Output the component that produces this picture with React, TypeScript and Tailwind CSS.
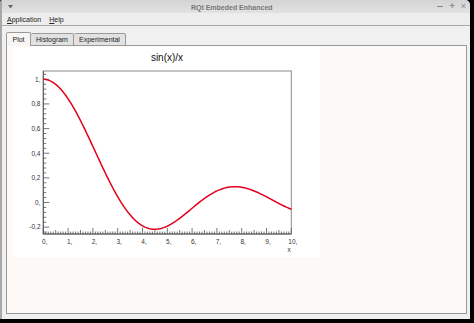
import React from "react";

const W = 307;
const H = 210;
const X = (v: number) => 30.3 + 24.8 * v;
const Y = (v: number) => 155.5 - 123.2 * v;

function SincPlot() {
  const pts: string[] = [];
  for (let i = 0; i <= 200; i++) {
    const x = (i / 200) * 10;
    const y = x === 0 ? 1 : Math.sin(x) / x;
    pts.push(`${X(x).toFixed(2)},${Y(y).toFixed(2)}`);
  }

  // y ticks every 0.04, major every 0.2
  const yTicks: { y: number; major: boolean }[] = [];
  for (let k = -6; k <= 26; k++) {
    const v = k * 0.04;
    if (Y(v) < 24 || Y(v) > 187) continue;
    yTicks.push({ y: Y(v), major: k % 5 === 0 });
  }
  // x ticks every 0.1, major every 1
  const xTicks: { x: number; len: number }[] = [];
  for (let k = 0; k <= 100; k++) {
    xTicks.push({ x: X(k / 10), len: k % 10 === 0 ? 6 : k % 5 === 0 ? 4 : 2.5 });
  }
  const yLabels = [
    { v: 1, t: "1," },
    { v: 0.8, t: "0,8" },
    { v: 0.6, t: "0,6" },
    { v: 0.4, t: "0,4" },
    { v: 0.2, t: "0,2" },
    { v: 0, t: "0," },
    { v: -0.2, t: "-0,2" },
  ];

  return (
    <svg width={W} height={H} className="block bg-white" style={{ fontFamily: "'Liberation Sans', Arial, sans-serif" }}>
      <text x={154} y={14} fontSize={10} textAnchor="middle" fill="#111">sin(x)/x</text>
      <rect x={30.3} y={24} width={248} height={163} fill="none" stroke="#8a8a8a" strokeWidth={1} />
      <line x1={30.3} y1={24} x2={30.3} y2={187} stroke="#555" strokeWidth={1} />
      <line x1={30.3} y1={187} x2={278.3} y2={187} stroke="#555" strokeWidth={1} />
      {yTicks.map((t, i) => (
        <line key={"y" + i} x1={30.3} y1={t.y} x2={30.3 + (t.major ? 6 : 3)} y2={t.y} stroke="#555" strokeWidth={0.8} />
      ))}
      {xTicks.map((t, i) => (
        <line key={"x" + i} x1={t.x} y1={187} x2={t.x} y2={187 - t.len} stroke="#555" strokeWidth={0.8} />
      ))}
      {yLabels.map((l) => (
        <text key={l.t} x={27.5} y={Y(l.v) + 2.3} fontSize={6.5} textAnchor="end" fill="#333">{l.t}</text>
      ))}
      {Array.from({ length: 11 }, (_, i) => (
        <text key={"xl" + i} x={X(i) + 1.5} y={197} fontSize={6.5} textAnchor="middle" fill="#333">{i + ","}</text>
      ))}
      <text x={276} y={205} fontSize={6.5} textAnchor="middle" fill="#333">x</text>
      <polyline points={pts.join(" ")} fill="none" stroke="#e3001b" strokeWidth={1.5} strokeLinejoin="round" />
    </svg>
  );
}

export default function App() {
  return (
    <div className="w-[474px] h-[323px] bg-black overflow-hidden" style={{ fontFamily: "'Liberation Sans', Arial, sans-serif" }}>
      <div className="w-[470px] h-[319px] bg-[#f0f0f0] rounded-tr-[5px] rounded-tl-[2px] border-l-2 border-[#a8a8a8] flex flex-col overflow-hidden">
        {/* title bar */}
        <div className="h-[13px] bg-gradient-to-b from-[#d4d4d4] to-[#e2e2e2] flex items-center text-[7px] text-[#777]">
          <div className="w-[14px] flex justify-center pl-[2px]">
            <svg width="5" height="4" viewBox="0 0 5 4"><path d="M0 0 L5 0 L2.5 3.5 Z" fill="#666" /></svg>
          </div>
          <div className="flex-1 text-center font-bold pl-[10px] leading-none pt-[2px]">RQt Embeded Enhanced</div>
          <div className="flex items-center gap-[6px] pr-[4px] text-[#888] leading-none">
            <span className="w-[6px] h-[1px] bg-[#888]" />
            <span className="text-[9px] font-bold">+</span>
            <span className="text-[9px]">×</span>
          </div>
        </div>
        {/* menu bar */}
        <div className="h-[12px] bg-[#ededed] flex items-center gap-[8px] pl-[5px] text-[7px] text-[#222] leading-none">
          <span><span className="underline">A</span>pplication</span>
          <span><span className="underline">H</span>elp</span>
        </div>
        <div className="h-[1px] bg-[#a9a9a9]" />
        {/* tabs */}
        <div className="flex-1 flex flex-col pt-[6px] pl-[4px] pr-[3px] pb-[5px]">
          <div className="flex items-end h-[14px] text-[7px] text-[#222] leading-none relative z-10">
            <div className="h-[14px] w-[25px] bg-[#f8f6f4] border border-b-0 border-[#9a9a9a] rounded-t-[2px] flex items-center justify-center">Plot</div>
            <div className="h-[13px] w-[43px] bg-[#e2e2e2] border border-l-0 border-[#9a9a9a] rounded-t-[2px] flex items-center justify-center">Histogram</div>
            <div className="h-[13px] w-[52px] bg-[#e2e2e2] border border-l-0 border-[#9a9a9a] rounded-t-[2px] flex items-center justify-center">Experimental</div>
          </div>
          <div className="flex-1 -mt-[1px] border border-[#9a9a9a] bg-[#fcf9f6] pl-[6px] pt-[1px]">
            <SincPlot />
          </div>
        </div>
      </div>
    </div>
  );
}
